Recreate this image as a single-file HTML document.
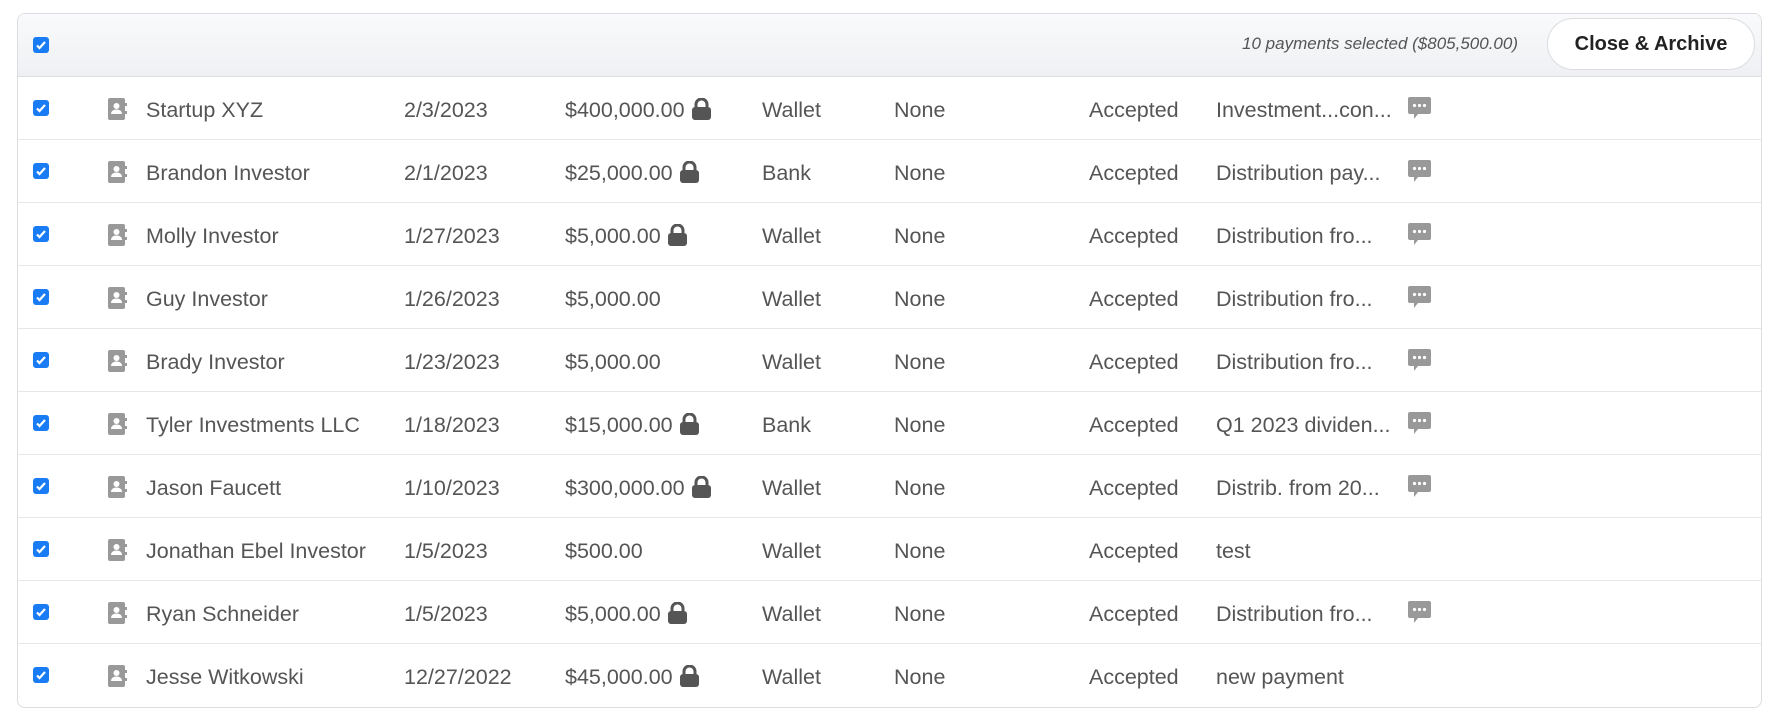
<!DOCTYPE html>
<html><head><meta charset="utf-8"><style>
*{margin:0;padding:0;box-sizing:border-box}
body{width:1782px;height:724px;background:#fff;font-family:"Liberation Sans",Helvetica,Arial,sans-serif;position:relative;overflow:hidden}
.box{position:absolute;left:17px;top:13px;width:1745px;height:695px;border:1px solid #dcdde0;border-radius:8px;overflow:hidden}
.hdr{position:absolute;left:0;top:0;width:100%;height:63px;background:linear-gradient(#f9fafb,#eef0f3);border-bottom:1px solid #dcdde0}
.cb{position:absolute;left:15px;width:16px;height:16px;background:#1a7cf5;border-radius:3px}
.cb svg{position:absolute;left:2px;top:2px}
.sel{position:absolute;right:243px;top:20px;font-size:17px;font-style:italic;color:#555}
.btn{position:absolute;left:1529px;top:4px;width:208px;height:52px;border:1px solid #dcdde0;border-radius:26px;background:#fff;font-weight:bold;font-size:20px;color:#222;text-align:center;line-height:50px}
.row{position:absolute;left:0;width:100%;height:63px;border-bottom:1px solid #e6e7e9;font-size:21.5px;color:#555}
.row .t{position:absolute;top:21px;line-height:25px;white-space:nowrap}
.row .cb{top:23px}
.u{position:absolute;left:89px;top:21px}
.lk{position:absolute;top:0;margin-left:7px}
.cm{position:absolute;left:1390px;top:20px}
</style></head><body>
<div class="box">
<div class="hdr">
<div class="cb" style="top:23px"><svg width="12" height="12" viewBox="0 0 12 12"><path d="M2 6.5l2.5 2.5L10 3" stroke="#fff" stroke-width="2.2" fill="none"/></svg></div>
<div class="sel">10 payments selected ($805,500.00)</div>
<div class="btn">Close &amp; Archive</div>
</div>

<div class="row" style="top:63px"><div class="cb"><svg width="12" height="12" viewBox="0 0 12 12"><path d="M2 6.5l2.5 2.5L10 3" stroke="#fff" stroke-width="2.2" fill="none"/></svg></div><svg class="u" width="20" height="22" viewBox="0 0 20 22"><rect x="1" y="0" width="17" height="22" rx="2" fill="#999"/><rect x="18" y="5" width="2" height="3" fill="#999"/><rect x="18" y="13" width="2" height="3" fill="#999"/><circle cx="9.5" cy="8" r="3" fill="#fff"/><path d="M4 16c0-3 2.5-4.5 5.5-4.5s5.5 1.5 5.5 4.5z" fill="#fff"/></svg><span class="t" style="left:128px">Startup XYZ</span><span class="t" style="left:386px">2/3/2023</span><span class="t" style="left:547px">$400,000.00<svg class="lk" width="19" height="22" viewBox="0 0 19 22"><path d="M4 9V6.5a5.5 5.5 0 0 1 11 0V9" stroke="#555" stroke-width="3" fill="none"/><rect x="0" y="9" width="19" height="13" rx="3" fill="#555"/></svg></span><span class="t" style="left:744px">Wallet</span><span class="t" style="left:876px">None</span><span class="t" style="left:1071px">Accepted</span><span class="t" style="left:1198px">Investment...con...</span><svg class="cm" width="23" height="23" viewBox="0 0 23 23"><path d="M2 0h19a2 2 0 0 1 2 2v13a2 2 0 0 1-2 2H10l-4 5v-5H2a2 2 0 0 1-2-2V2a2 2 0 0 1 2-2z" fill="#999"/><circle cx="6.5" cy="8.5" r="1.6" fill="#fff"/><circle cx="11.5" cy="8.5" r="1.6" fill="#fff"/><circle cx="16.5" cy="8.5" r="1.6" fill="#fff"/></svg></div>

<div class="row" style="top:126px"><div class="cb"><svg width="12" height="12" viewBox="0 0 12 12"><path d="M2 6.5l2.5 2.5L10 3" stroke="#fff" stroke-width="2.2" fill="none"/></svg></div><svg class="u" width="20" height="22" viewBox="0 0 20 22"><rect x="1" y="0" width="17" height="22" rx="2" fill="#999"/><rect x="18" y="5" width="2" height="3" fill="#999"/><rect x="18" y="13" width="2" height="3" fill="#999"/><circle cx="9.5" cy="8" r="3" fill="#fff"/><path d="M4 16c0-3 2.5-4.5 5.5-4.5s5.5 1.5 5.5 4.5z" fill="#fff"/></svg><span class="t" style="left:128px">Brandon Investor</span><span class="t" style="left:386px">2/1/2023</span><span class="t" style="left:547px">$25,000.00<svg class="lk" width="19" height="22" viewBox="0 0 19 22"><path d="M4 9V6.5a5.5 5.5 0 0 1 11 0V9" stroke="#555" stroke-width="3" fill="none"/><rect x="0" y="9" width="19" height="13" rx="3" fill="#555"/></svg></span><span class="t" style="left:744px">Bank</span><span class="t" style="left:876px">None</span><span class="t" style="left:1071px">Accepted</span><span class="t" style="left:1198px">Distribution pay...</span><svg class="cm" width="23" height="23" viewBox="0 0 23 23"><path d="M2 0h19a2 2 0 0 1 2 2v13a2 2 0 0 1-2 2H10l-4 5v-5H2a2 2 0 0 1-2-2V2a2 2 0 0 1 2-2z" fill="#999"/><circle cx="6.5" cy="8.5" r="1.6" fill="#fff"/><circle cx="11.5" cy="8.5" r="1.6" fill="#fff"/><circle cx="16.5" cy="8.5" r="1.6" fill="#fff"/></svg></div>

<div class="row" style="top:189px"><div class="cb"><svg width="12" height="12" viewBox="0 0 12 12"><path d="M2 6.5l2.5 2.5L10 3" stroke="#fff" stroke-width="2.2" fill="none"/></svg></div><svg class="u" width="20" height="22" viewBox="0 0 20 22"><rect x="1" y="0" width="17" height="22" rx="2" fill="#999"/><rect x="18" y="5" width="2" height="3" fill="#999"/><rect x="18" y="13" width="2" height="3" fill="#999"/><circle cx="9.5" cy="8" r="3" fill="#fff"/><path d="M4 16c0-3 2.5-4.5 5.5-4.5s5.5 1.5 5.5 4.5z" fill="#fff"/></svg><span class="t" style="left:128px">Molly Investor</span><span class="t" style="left:386px">1/27/2023</span><span class="t" style="left:547px">$5,000.00<svg class="lk" width="19" height="22" viewBox="0 0 19 22"><path d="M4 9V6.5a5.5 5.5 0 0 1 11 0V9" stroke="#555" stroke-width="3" fill="none"/><rect x="0" y="9" width="19" height="13" rx="3" fill="#555"/></svg></span><span class="t" style="left:744px">Wallet</span><span class="t" style="left:876px">None</span><span class="t" style="left:1071px">Accepted</span><span class="t" style="left:1198px">Distribution fro...</span><svg class="cm" width="23" height="23" viewBox="0 0 23 23"><path d="M2 0h19a2 2 0 0 1 2 2v13a2 2 0 0 1-2 2H10l-4 5v-5H2a2 2 0 0 1-2-2V2a2 2 0 0 1 2-2z" fill="#999"/><circle cx="6.5" cy="8.5" r="1.6" fill="#fff"/><circle cx="11.5" cy="8.5" r="1.6" fill="#fff"/><circle cx="16.5" cy="8.5" r="1.6" fill="#fff"/></svg></div>

<div class="row" style="top:252px"><div class="cb"><svg width="12" height="12" viewBox="0 0 12 12"><path d="M2 6.5l2.5 2.5L10 3" stroke="#fff" stroke-width="2.2" fill="none"/></svg></div><svg class="u" width="20" height="22" viewBox="0 0 20 22"><rect x="1" y="0" width="17" height="22" rx="2" fill="#999"/><rect x="18" y="5" width="2" height="3" fill="#999"/><rect x="18" y="13" width="2" height="3" fill="#999"/><circle cx="9.5" cy="8" r="3" fill="#fff"/><path d="M4 16c0-3 2.5-4.5 5.5-4.5s5.5 1.5 5.5 4.5z" fill="#fff"/></svg><span class="t" style="left:128px">Guy Investor</span><span class="t" style="left:386px">1/26/2023</span><span class="t" style="left:547px">$5,000.00</span><span class="t" style="left:744px">Wallet</span><span class="t" style="left:876px">None</span><span class="t" style="left:1071px">Accepted</span><span class="t" style="left:1198px">Distribution fro...</span><svg class="cm" width="23" height="23" viewBox="0 0 23 23"><path d="M2 0h19a2 2 0 0 1 2 2v13a2 2 0 0 1-2 2H10l-4 5v-5H2a2 2 0 0 1-2-2V2a2 2 0 0 1 2-2z" fill="#999"/><circle cx="6.5" cy="8.5" r="1.6" fill="#fff"/><circle cx="11.5" cy="8.5" r="1.6" fill="#fff"/><circle cx="16.5" cy="8.5" r="1.6" fill="#fff"/></svg></div>

<div class="row" style="top:315px"><div class="cb"><svg width="12" height="12" viewBox="0 0 12 12"><path d="M2 6.5l2.5 2.5L10 3" stroke="#fff" stroke-width="2.2" fill="none"/></svg></div><svg class="u" width="20" height="22" viewBox="0 0 20 22"><rect x="1" y="0" width="17" height="22" rx="2" fill="#999"/><rect x="18" y="5" width="2" height="3" fill="#999"/><rect x="18" y="13" width="2" height="3" fill="#999"/><circle cx="9.5" cy="8" r="3" fill="#fff"/><path d="M4 16c0-3 2.5-4.5 5.5-4.5s5.5 1.5 5.5 4.5z" fill="#fff"/></svg><span class="t" style="left:128px">Brady Investor</span><span class="t" style="left:386px">1/23/2023</span><span class="t" style="left:547px">$5,000.00</span><span class="t" style="left:744px">Wallet</span><span class="t" style="left:876px">None</span><span class="t" style="left:1071px">Accepted</span><span class="t" style="left:1198px">Distribution fro...</span><svg class="cm" width="23" height="23" viewBox="0 0 23 23"><path d="M2 0h19a2 2 0 0 1 2 2v13a2 2 0 0 1-2 2H10l-4 5v-5H2a2 2 0 0 1-2-2V2a2 2 0 0 1 2-2z" fill="#999"/><circle cx="6.5" cy="8.5" r="1.6" fill="#fff"/><circle cx="11.5" cy="8.5" r="1.6" fill="#fff"/><circle cx="16.5" cy="8.5" r="1.6" fill="#fff"/></svg></div>

<div class="row" style="top:378px"><div class="cb"><svg width="12" height="12" viewBox="0 0 12 12"><path d="M2 6.5l2.5 2.5L10 3" stroke="#fff" stroke-width="2.2" fill="none"/></svg></div><svg class="u" width="20" height="22" viewBox="0 0 20 22"><rect x="1" y="0" width="17" height="22" rx="2" fill="#999"/><rect x="18" y="5" width="2" height="3" fill="#999"/><rect x="18" y="13" width="2" height="3" fill="#999"/><circle cx="9.5" cy="8" r="3" fill="#fff"/><path d="M4 16c0-3 2.5-4.5 5.5-4.5s5.5 1.5 5.5 4.5z" fill="#fff"/></svg><span class="t" style="left:128px">Tyler Investments LLC</span><span class="t" style="left:386px">1/18/2023</span><span class="t" style="left:547px">$15,000.00<svg class="lk" width="19" height="22" viewBox="0 0 19 22"><path d="M4 9V6.5a5.5 5.5 0 0 1 11 0V9" stroke="#555" stroke-width="3" fill="none"/><rect x="0" y="9" width="19" height="13" rx="3" fill="#555"/></svg></span><span class="t" style="left:744px">Bank</span><span class="t" style="left:876px">None</span><span class="t" style="left:1071px">Accepted</span><span class="t" style="left:1198px">Q1 2023 dividen...</span><svg class="cm" width="23" height="23" viewBox="0 0 23 23"><path d="M2 0h19a2 2 0 0 1 2 2v13a2 2 0 0 1-2 2H10l-4 5v-5H2a2 2 0 0 1-2-2V2a2 2 0 0 1 2-2z" fill="#999"/><circle cx="6.5" cy="8.5" r="1.6" fill="#fff"/><circle cx="11.5" cy="8.5" r="1.6" fill="#fff"/><circle cx="16.5" cy="8.5" r="1.6" fill="#fff"/></svg></div>

<div class="row" style="top:441px"><div class="cb"><svg width="12" height="12" viewBox="0 0 12 12"><path d="M2 6.5l2.5 2.5L10 3" stroke="#fff" stroke-width="2.2" fill="none"/></svg></div><svg class="u" width="20" height="22" viewBox="0 0 20 22"><rect x="1" y="0" width="17" height="22" rx="2" fill="#999"/><rect x="18" y="5" width="2" height="3" fill="#999"/><rect x="18" y="13" width="2" height="3" fill="#999"/><circle cx="9.5" cy="8" r="3" fill="#fff"/><path d="M4 16c0-3 2.5-4.5 5.5-4.5s5.5 1.5 5.5 4.5z" fill="#fff"/></svg><span class="t" style="left:128px">Jason Faucett</span><span class="t" style="left:386px">1/10/2023</span><span class="t" style="left:547px">$300,000.00<svg class="lk" width="19" height="22" viewBox="0 0 19 22"><path d="M4 9V6.5a5.5 5.5 0 0 1 11 0V9" stroke="#555" stroke-width="3" fill="none"/><rect x="0" y="9" width="19" height="13" rx="3" fill="#555"/></svg></span><span class="t" style="left:744px">Wallet</span><span class="t" style="left:876px">None</span><span class="t" style="left:1071px">Accepted</span><span class="t" style="left:1198px">Distrib. from 20...</span><svg class="cm" width="23" height="23" viewBox="0 0 23 23"><path d="M2 0h19a2 2 0 0 1 2 2v13a2 2 0 0 1-2 2H10l-4 5v-5H2a2 2 0 0 1-2-2V2a2 2 0 0 1 2-2z" fill="#999"/><circle cx="6.5" cy="8.5" r="1.6" fill="#fff"/><circle cx="11.5" cy="8.5" r="1.6" fill="#fff"/><circle cx="16.5" cy="8.5" r="1.6" fill="#fff"/></svg></div>

<div class="row" style="top:504px"><div class="cb"><svg width="12" height="12" viewBox="0 0 12 12"><path d="M2 6.5l2.5 2.5L10 3" stroke="#fff" stroke-width="2.2" fill="none"/></svg></div><svg class="u" width="20" height="22" viewBox="0 0 20 22"><rect x="1" y="0" width="17" height="22" rx="2" fill="#999"/><rect x="18" y="5" width="2" height="3" fill="#999"/><rect x="18" y="13" width="2" height="3" fill="#999"/><circle cx="9.5" cy="8" r="3" fill="#fff"/><path d="M4 16c0-3 2.5-4.5 5.5-4.5s5.5 1.5 5.5 4.5z" fill="#fff"/></svg><span class="t" style="left:128px">Jonathan Ebel Investor</span><span class="t" style="left:386px">1/5/2023</span><span class="t" style="left:547px">$500.00</span><span class="t" style="left:744px">Wallet</span><span class="t" style="left:876px">None</span><span class="t" style="left:1071px">Accepted</span><span class="t" style="left:1198px">test</span></div>

<div class="row" style="top:567px"><div class="cb"><svg width="12" height="12" viewBox="0 0 12 12"><path d="M2 6.5l2.5 2.5L10 3" stroke="#fff" stroke-width="2.2" fill="none"/></svg></div><svg class="u" width="20" height="22" viewBox="0 0 20 22"><rect x="1" y="0" width="17" height="22" rx="2" fill="#999"/><rect x="18" y="5" width="2" height="3" fill="#999"/><rect x="18" y="13" width="2" height="3" fill="#999"/><circle cx="9.5" cy="8" r="3" fill="#fff"/><path d="M4 16c0-3 2.5-4.5 5.5-4.5s5.5 1.5 5.5 4.5z" fill="#fff"/></svg><span class="t" style="left:128px">Ryan Schneider</span><span class="t" style="left:386px">1/5/2023</span><span class="t" style="left:547px">$5,000.00<svg class="lk" width="19" height="22" viewBox="0 0 19 22"><path d="M4 9V6.5a5.5 5.5 0 0 1 11 0V9" stroke="#555" stroke-width="3" fill="none"/><rect x="0" y="9" width="19" height="13" rx="3" fill="#555"/></svg></span><span class="t" style="left:744px">Wallet</span><span class="t" style="left:876px">None</span><span class="t" style="left:1071px">Accepted</span><span class="t" style="left:1198px">Distribution fro...</span><svg class="cm" width="23" height="23" viewBox="0 0 23 23"><path d="M2 0h19a2 2 0 0 1 2 2v13a2 2 0 0 1-2 2H10l-4 5v-5H2a2 2 0 0 1-2-2V2a2 2 0 0 1 2-2z" fill="#999"/><circle cx="6.5" cy="8.5" r="1.6" fill="#fff"/><circle cx="11.5" cy="8.5" r="1.6" fill="#fff"/><circle cx="16.5" cy="8.5" r="1.6" fill="#fff"/></svg></div>

<div class="row" style="top:630px;border-bottom:none"><div class="cb"><svg width="12" height="12" viewBox="0 0 12 12"><path d="M2 6.5l2.5 2.5L10 3" stroke="#fff" stroke-width="2.2" fill="none"/></svg></div><svg class="u" width="20" height="22" viewBox="0 0 20 22"><rect x="1" y="0" width="17" height="22" rx="2" fill="#999"/><rect x="18" y="5" width="2" height="3" fill="#999"/><rect x="18" y="13" width="2" height="3" fill="#999"/><circle cx="9.5" cy="8" r="3" fill="#fff"/><path d="M4 16c0-3 2.5-4.5 5.5-4.5s5.5 1.5 5.5 4.5z" fill="#fff"/></svg><span class="t" style="left:128px">Jesse Witkowski</span><span class="t" style="left:386px">12/27/2022</span><span class="t" style="left:547px">$45,000.00<svg class="lk" width="19" height="22" viewBox="0 0 19 22"><path d="M4 9V6.5a5.5 5.5 0 0 1 11 0V9" stroke="#555" stroke-width="3" fill="none"/><rect x="0" y="9" width="19" height="13" rx="3" fill="#555"/></svg></span><span class="t" style="left:744px">Wallet</span><span class="t" style="left:876px">None</span><span class="t" style="left:1071px">Accepted</span><span class="t" style="left:1198px">new payment</span></div>

</div>
</body></html>
